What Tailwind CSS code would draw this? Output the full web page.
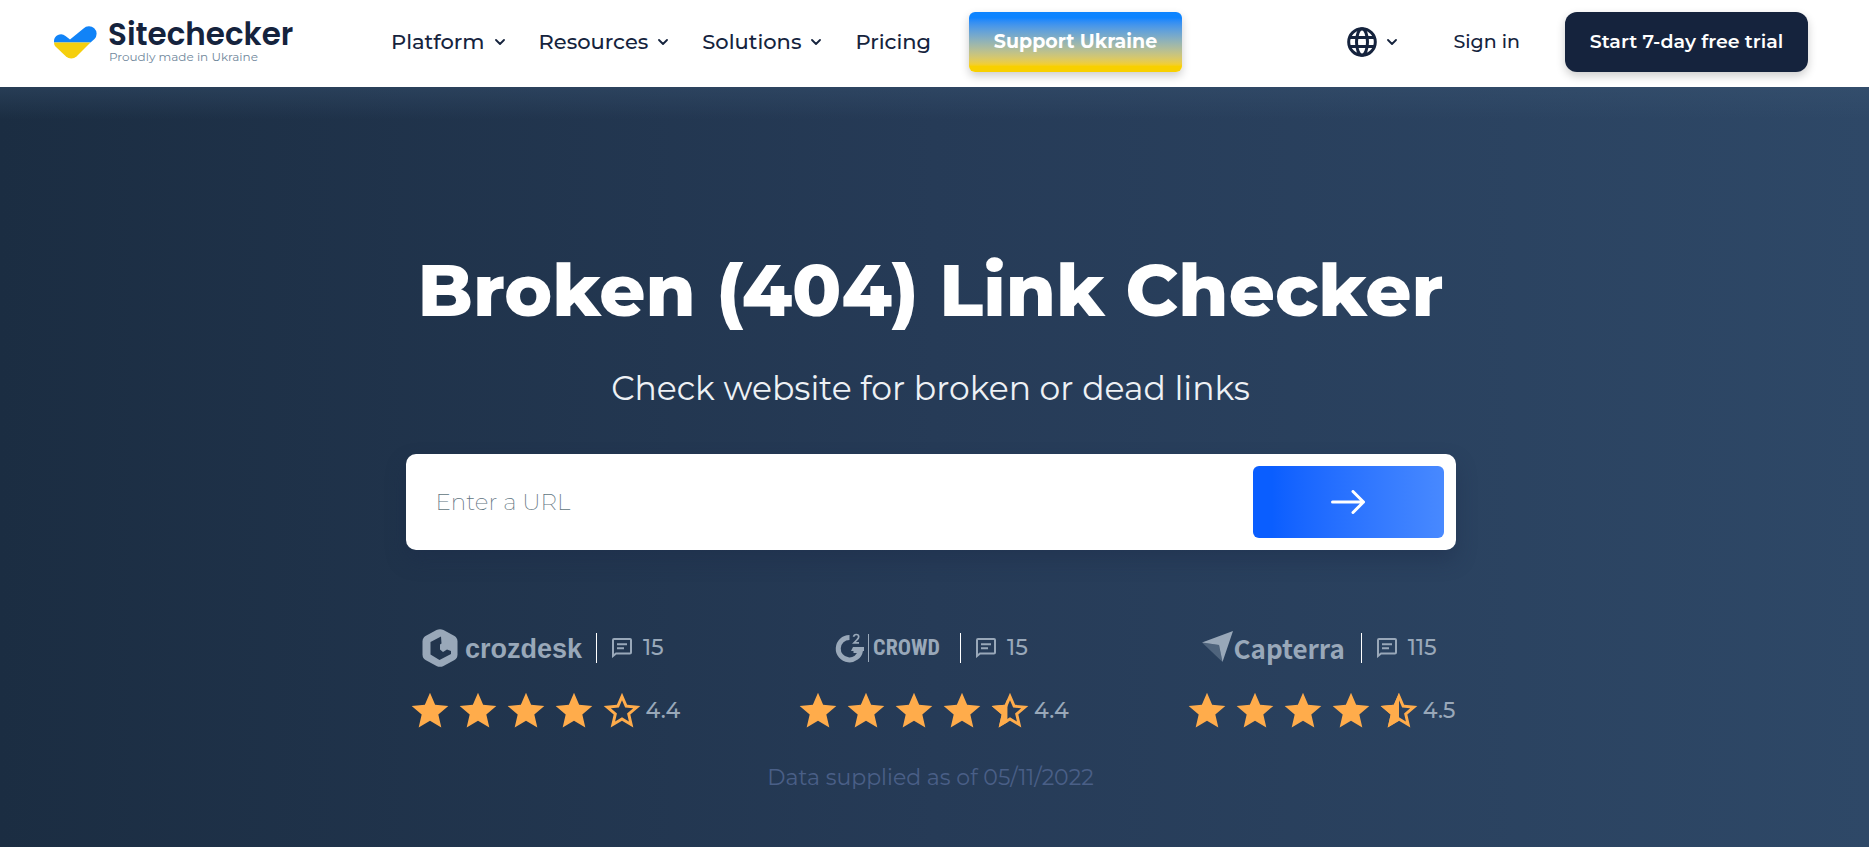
<!DOCTYPE html>
<html lang="en">
<head>
    <meta charset="UTF-8">
    <meta name="viewport" content="width=device-width, initial-scale=1.0">
    <title>Broken (404) Link Checker</title>
    <script src="https://cdn.jsdelivr.net/npm/@tailwindcss/browser@4"></script>
</head>
<body class="min-h-screen flex flex-col bg-[#22354d] font-['Montserrat','Inter',sans-serif] text-[#15233d]">
    <!-- shared icons -->
    <svg class="hidden">
        <symbol id="chevron" viewBox="0 0 10 6"><path d="M1 1l4 4 4-4" fill="none" stroke="currentColor" stroke-width="1.8" stroke-linecap="round" stroke-linejoin="round"/></symbol>
        <symbol id="comment" viewBox="0 0 20 20"><path d="M1 18V2a1 1 0 0 1 1-1h16a1 1 0 0 1 1 1v12.500a1 1 0 0 1-1 1H4zM5 6.200h10M5 10.200h7" fill="none" stroke="currentColor" stroke-width="2"/></symbol>
        <symbol id="star" viewBox="0 0 24 24"><path d="M12 17.270 18.180 21l-1.640-7.030L22 9.240l-7.190-.61L12 2 9.190 8.630 2 9.240l5.460 4.730L5.820 21z" fill="currentColor"/></symbol>
        <symbol id="star-empty" viewBox="0 0 24 24"><path d="M22 9.240l-7.190-.62L12 2 9.190 8.630 2 9.240l5.460 4.730L5.820 21 12 17.270 18.180 21l-1.630-7.030zM12 15.400l-3.760 2.270 1-4.280-3.320-2.880 4.380-.38L12 6.100l1.710 4.040 4.380.38-3.320 2.880 1 4.280z" fill="currentColor"/></symbol>
        <symbol id="star-40" viewBox="0 0 24 24"><use href="#star-empty"/><path d="M10.600 5.300 9.190 8.630 2 9.240l5.460 4.730L5.820 21l4.780-2.880z" fill="currentColor"/></symbol>
        <symbol id="star-50" viewBox="0 0 24 24"><use href="#star-empty"/><path d="M12 2 9.190 8.630 2 9.240l5.460 4.730L5.820 21 12 17.270z" fill="currentColor"/></symbol>
    </svg>

    <header class="h-[87px] shrink-0 bg-white flex items-center pl-[54px] pr-[61px] pb-[3px]">
        <a href="#" class="flex items-center gap-[11px] w-[337px] shrink-0">
            <svg class="w-[43px] h-[33px]" viewBox="0 0 43 33">
                <path d="M0 16.500v-1a7 7 0 0 1 11.500-5.500l4.500 3.500L29.500 2.500a7.600 7.600 0 0 1 11 10.500l-4 3.500z" fill="#1183f7"/>
                <path d="M0 16.500h36.500L22.500 30.500a8 8 0 0 1-10.500 0L1.500 20.500A6 6 0 0 1 0 16.500z" fill="#f5cf0e"/>
            </svg>
            <span>
                <span class="block font-['Poppins','Montserrat','Inter',sans-serif] text-[31px] leading-[30px] font-semibold">Sitechecker</span>
                <span class="block text-[12px] leading-4 pl-px text-[#71889c]">Proudly made in Ukraine</span>
            </span>
        </a>
        <nav class="flex items-center gap-[34px] text-[21px] leading-6 font-medium">
            <button class="flex items-center gap-[10px]">Platform <svg class="w-[10px] h-[6px]"><use href="#chevron"/></svg></button>
            <button class="flex items-center gap-[10px]">Resources <svg class="w-[10px] h-[6px]"><use href="#chevron"/></svg></button>
            <button class="flex items-center gap-[10px]">Solutions <svg class="w-[10px] h-[6px]"><use href="#chevron"/></svg></button>
            <a href="#">Pricing</a>
        </nav>
        <a href="#" class="ml-[38px] w-[213px] h-[60px] rounded-md bg-linear-to-b from-[#0d84ff] from-10% to-[#f8d000] to-90% shadow-[0_4px_10px_#0003] flex items-center justify-center text-white text-[19px] font-bold">Support Ukraine</a>
        <div class="ml-auto flex items-center">
            <button class="flex items-center gap-[10px]" aria-label="Language">
                <svg class="w-[30px] h-[30px]" viewBox="0 0 30 30" fill="none" stroke="currentColor" stroke-width="3">
                    <circle cx="15" cy="15" r="13.300"/><ellipse cx="15" cy="15" rx="5.500" ry="13.300"/><path d="M3 10.500h24M3 19.500h24"/>
                </svg>
                <svg class="w-[10px] h-[6px]"><use href="#chevron"/></svg>
            </button>
            <a href="#" class="ml-[56px] text-[19px] font-medium">Sign in</a>
            <a href="#" class="ml-[45px] w-[243px] h-[60px] rounded-xl bg-[#15233d] shadow-[0_4px_10px_#0003] flex items-center justify-center text-white text-[19px] font-semibold">Start 7-day free trial</a>
        </div>
    </header>

    <main class="grow bg-linear-to-r from-[#1b2d42] via-[#263b57] to-[#2e4867]">
        <div class="h-8 bg-linear-to-b from-[#3a5573]/40 to-transparent"></div>
        <div class="w-[1050px] max-w-full mx-auto -translate-x-1 pt-[131px] flex flex-col items-center">
            <h1 class="text-white text-[72px] leading-[80px] font-extrabold whitespace-nowrap">Broken (404) Link Checker</h1>
            <p class="mt-[36px] text-[33px] leading-[44px] text-[#eef1f5]">Check website for broken or dead links</p>
            <form class="mt-[44px] w-full h-[96px] bg-white rounded-[10px] shadow-[0_10px_20px_#1b2b4866] p-3 pl-[30px] flex">
                <input type="text" aria-label="Enter a URL" placeholder="Enter a URL" class="grow text-[23px] font-extralight outline-none placeholder:text-[#5f7480]">
                <button type="button" aria-label="Check" class="w-[191px] rounded-md bg-linear-to-r from-[#0a5eff] from-10% to-[#4889ff] flex items-center justify-center text-white">
                    <svg class="w-[34px] h-[24px]" viewBox="0 0 34 24" fill="none" stroke="currentColor" stroke-width="3" stroke-linecap="round" stroke-linejoin="round"><path d="M1.500 12h31M22 1.500 32.500 12 22 22.500"/></svg>
                </button>
            </form>

            <div class="mt-[78px] w-full flex justify-between text-[22px] leading-6 text-[#99a8b9]">
                <div class="flex flex-col items-center">
                    <div class="h-[40px] flex items-center">
                        <svg class="w-[36px] h-[38px]" viewBox="0 0 36 38"><path d="M14.500 1a8 8 0 0 1 7 0l11 6q3 2 3 5.500v13q0 3.500-3 5.500l-11 6a8 8 0 0 1-7 0l-11-6q-3-2-3-5.500v-13Q.5 9 3.500 7z" fill="currentColor"/><path d="M19 7.500 8.500 13v12.500L17.500 31 29 25v-3l-4-1.500-4 2.500-3-2.500v-5l1.500-1z" fill="#22354d"/></svg>
                        <span class="ml-[7px] pt-[2px] font-['Liberation_Sans',sans-serif] text-[27px] leading-8 font-bold">crozdesk</span>
                        <span class="ml-[14px] w-px h-[30px] bg-white"></span>
                        <svg class="ml-[15px] w-5 h-5"><use href="#comment"/></svg>
                        <span class="ml-[11px] font-medium">15</span>
                    </div>
                    <div class="mt-[21px] flex items-center">
                        <div class="flex text-[#ffac4b]">
                            <svg class="w-11 h-11 mx-[2px]"><use href="#star"/></svg>
                            <svg class="w-11 h-11 mx-[2px]"><use href="#star"/></svg>
                            <svg class="w-11 h-11 mx-[2px]"><use href="#star"/></svg>
                            <svg class="w-11 h-11 mx-[2px]"><use href="#star"/></svg>
                            <svg class="w-11 h-11 mx-[2px]"><use href="#star-empty"/></svg>
                        </div>
                        <span class="font-medium">4.4</span>
                    </div>
                </div>
                <div class="flex flex-col items-center">
                    <div class="h-[40px] flex items-center">
                        <svg class="w-[30px] h-[30px]" viewBox="0 0 30 30"><path d="M14.500 4.500A11.200 11.200 0 1 0 25.500 17.500H18.500" fill="none" stroke="currentColor" stroke-width="5"/><path d="M18 14h11v4H16z" fill="currentColor"/><path d="M18.500 3.800q.5-2.300 2.700-2.300 2.500 0 2.500 2.200 0 1.500-1.500 2.800l-3.200 3.300h5" fill="none" stroke="currentColor" stroke-width="1.700"/></svg>
                        <span class="ml-[3px] w-px h-7 bg-current"></span>
                        <span class="ml-1 font-['Roboto_Condensed','Roboto',sans-serif] text-[22px] font-bold">CROWD</span>
                        <span class="ml-[20px] w-px h-[30px] bg-white"></span>
                        <svg class="ml-[15px] w-5 h-5"><use href="#comment"/></svg>
                        <span class="ml-[11px] font-medium">15</span>
                    </div>
                    <div class="mt-[21px] flex items-center">
                        <div class="flex text-[#ffac4b]">
                            <svg class="w-11 h-11 mx-[2px]"><use href="#star"/></svg>
                            <svg class="w-11 h-11 mx-[2px]"><use href="#star"/></svg>
                            <svg class="w-11 h-11 mx-[2px]"><use href="#star"/></svg>
                            <svg class="w-11 h-11 mx-[2px]"><use href="#star"/></svg>
                            <svg class="w-11 h-11 mx-[2px]"><use href="#star-40"/></svg>
                        </div>
                        <span class="font-medium">4.4</span>
                    </div>
                </div>
                <div class="flex flex-col items-center">
                    <div class="h-[40px] flex items-center">
                        <svg class="w-[31px] h-[31px] -mt-1" viewBox="0 0 31 31"><path d="M0 11.500 31 0 20.500 31 17 14z" fill="currentColor"/><path d="M0 11.500 17 14l3.500 17z" fill="currentColor" opacity=".35"/></svg>
                        <span class="ml-px font-['Noto_Sans_CJK_SC',sans-serif] text-[26px] font-bold">Capterra</span>
                        <span class="ml-[16px] w-px h-[30px] bg-white"></span>
                        <svg class="ml-[15px] w-5 h-5"><use href="#comment"/></svg>
                        <span class="ml-[11px] font-medium">115</span>
                    </div>
                    <div class="mt-[21px] flex items-center">
                        <div class="flex text-[#ffac4b]">
                            <svg class="w-11 h-11 mx-[2px]"><use href="#star"/></svg>
                            <svg class="w-11 h-11 mx-[2px]"><use href="#star"/></svg>
                            <svg class="w-11 h-11 mx-[2px]"><use href="#star"/></svg>
                            <svg class="w-11 h-11 mx-[2px]"><use href="#star"/></svg>
                            <svg class="w-11 h-11 mx-[2px]"><use href="#star-50"/></svg>
                        </div>
                        <span class="font-medium">4.5</span>
                    </div>
                </div>
            </div>
            <p class="mt-[29px] text-[22px] leading-8 text-[#4a5f87]">Data supplied as of 05/11/2022</p>
        </div>
    </main>
</body>
</html>
